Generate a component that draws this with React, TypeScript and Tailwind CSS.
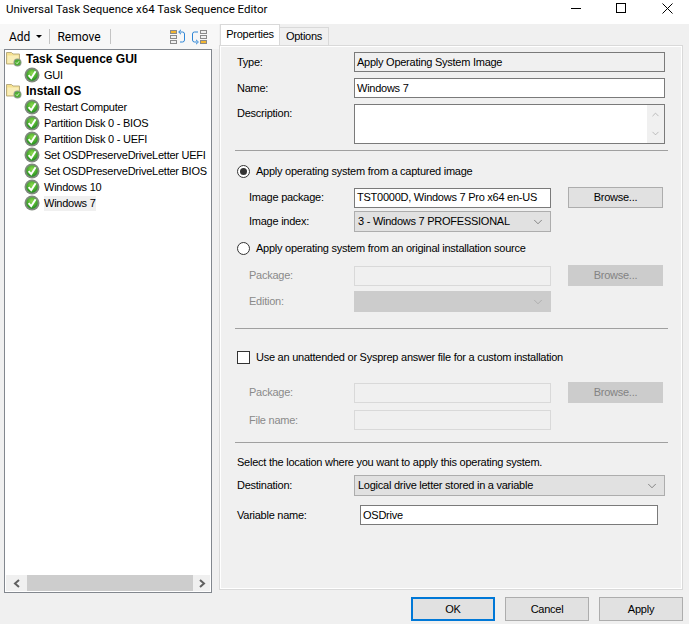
import React, { ReactNode } from "react";
import { ChevronDown, ChevronUp } from "lucide-react";

const steps = [
  { name: "Task Sequence GUI", group: true },
  { name: "GUI" },
  { name: "Install OS", group: true },
  { name: "Restart Computer" },
  { name: "Partition Disk 0 - BIOS" },
  { name: "Partition Disk 0 - UEFI" },
  { name: "Set OSDPreserveDriveLetter UEFI" },
  { name: "Set OSDPreserveDriveLetter BIOS" },
  { name: "Windows 10" },
  { name: "Windows 7", selected: true },
];

const CheckIcon = () => (
  <svg width="16" height="16" viewBox="0 0 16 16" className="shrink-0">
    <defs>
      <radialGradient id="chk" cx="50%" cy="35%" r="65%">
        <stop offset="0%" stopColor="#8fdc4e" />
        <stop offset="100%" stopColor="#1f8f1c" />
      </radialGradient>
    </defs>
    <circle cx="8" cy="8" r="7.5" fill="#7f8a7d" />
    <circle cx="8" cy="8" r="5.7" fill="url(#chk)" />
    <path d="M4.6 8.2 7.2 11.2 11.6 4.2" fill="none" stroke="#fff" strokeWidth="2" />
  </svg>
);

const FolderIcon = () => (
  <svg width="16" height="16" viewBox="0 0 16 16" className="shrink-0">
    <path d="M0.5 1.5h5l1.5 1.5h6.5v10h-13z" fill="#f5e08f" stroke="#b9ad80" />
    <path d="M1.5 4.5h11v7.5h-11z" fill="#f9eeb8" />
    <circle cx="11.5" cy="11.5" r="4" fill="#8f9a8d" />
    <circle cx="11.5" cy="11.5" r="3" fill="#4fae33" />
    <path d="M10 11.5l1.1 1.2 1.9-2.4" fill="none" stroke="#dff5d0" strokeWidth="1" />
  </svg>
);

const MoveUpIcon = () => (
  <svg width="16" height="16" viewBox="0 0 16 16">
    <rect x="0.5" y="1.5" width="6" height="3" fill="#f2b632" stroke="#8a8a8a" />
    <rect x="0.5" y="6.5" width="6" height="3" fill="#f0f0f0" stroke="#8a8a8a" />
    <rect x="0.5" y="11.5" width="6" height="3" fill="#f0f0f0" stroke="#8a8a8a" />
    <path d="M9 3h3.5q2 0 2 2v6q0 2-2 2H10" fill="none" stroke="#2f86d6" strokeWidth="1" />
    <path d="M11 0.8 8.6 3 11 5.2" fill="none" stroke="#2f86d6" strokeWidth="1" />
  </svg>
);

const MoveDownIcon = () => (
  <svg width="16" height="16" viewBox="0 0 16 16">
    <rect x="9.5" y="1.5" width="6" height="3" fill="#f0f0f0" stroke="#8a8a8a" />
    <rect x="9.5" y="6.5" width="6" height="3" fill="#f0f0f0" stroke="#8a8a8a" />
    <rect x="9.5" y="11.5" width="6" height="3" fill="#f2b632" stroke="#8a8a8a" />
    <path d="M7 3H3.5q-2 0-2 2v6q0 2 2 2H6" fill="none" stroke="#2f86d6" strokeWidth="1" />
    <path d="M5 10.8 7.4 13 5 15.2" fill="none" stroke="#2f86d6" strokeWidth="1" />
  </svg>
);

const Field = ({ className, children }: { className: string; children?: ReactNode }) => (
  <div className={`flex items-center whitespace-nowrap border px-[2px] ${className}`}>{children}</div>
);

const Caret = ({ color }: { color: string }) => (
  <ChevronDown size={14} strokeWidth={1} color={color} className="ml-auto mr-[3px]" />
);

const Browse = ({ disabled }: { disabled?: boolean }) => (
  <div
    className={`flex h-[21px] w-[95px] items-center justify-center border ${
      disabled ? "border-[#cccccc] bg-[#cccccc] text-[#838383]" : "border-[#adadad] bg-[#e1e1e1]"
    }`}
  >
    Browse...
  </div>
);

const Divider = () => <div className="ml-[14px] h-px w-[433px] bg-[#a0a0a0]" />;

const Label = ({ children, className = "w-[117px]" }: { children: ReactNode; className?: string }) => (
  <div className={`shrink-0 ${className}`}>{children}</div>
);

const Radio = ({ checked }: { checked?: boolean }) => (
  <div className="flex h-[13px] w-[13px] items-center justify-center rounded-full border border-[#333333] bg-white">
    {checked && <div className="h-[7px] w-[7px] rounded-full bg-[#333333]" />}
  </div>
);

export default function App() {
  return (
    <div className="h-[624px] w-[689px] overflow-hidden bg-[#f0f0f0] font-['Liberation_Sans',sans-serif] text-[11px] leading-none tracking-[-0.25px] text-black">
      <div className="flex h-[24px] items-start bg-white pl-[6px] tracking-normal">
        <span className="pt-[2px] font-['Roboto',sans-serif] text-[11.5px] leading-[14px]">Universal Task Sequence x64 Task Sequence Editor</span>
        <svg width="103" height="16" viewBox="0 0 103 16" className="ml-auto mr-[15px]" fill="none" stroke="#000" strokeWidth="1">
          <path d="M0 8.5h10" />
          <rect x="45.5" y="3.5" width="9" height="9" />
          <path d="M91.5 3.5l10 10M101.5 3.5l-10 10" />
        </svg>
      </div>

      <div className="flex h-[573px]">
        <div className="w-[219px] shrink-0">
          <div className="flex h-[25px] items-center bg-[#f7f7f7] pl-[9px] font-['Roboto',sans-serif] text-[12px] tracking-normal">
            <span>Add</span>
            <div className="ml-[6px] h-0 w-0 border-x-[3px] border-t-[3px] border-x-transparent border-t-black" />
            <div className="ml-[7px] h-[15px] w-px bg-[#c4c4c4]" />
            <span className="ml-[7px]">Remove</span>
            <div className="ml-[9px] h-[15px] w-px bg-[#c4c4c4]" />
            <div className="ml-[59px]"><MoveUpIcon /></div>
            <div className="ml-[5px]"><MoveDownIcon /></div>
          </div>
          <div className="ml-[4px] flex h-[544px] w-[208px] flex-col justify-between border border-[#82878e] bg-white">
            <div className="pl-[1px] pt-[1px]">
              {steps.map((s) => (
                <div key={s.name} className={`flex h-[16px] items-center ${s.group ? "" : "pl-[18px]"}`}>
                  {s.group ? <FolderIcon /> : <CheckIcon />}
                  <span
                    className={`ml-[4px] whitespace-nowrap ${s.group ? "text-[12px] font-bold tracking-normal" : ""} ${
                      s.selected ? "bg-[#f0f0f0] py-[2px]" : ""
                    }`}
                  >
                    {s.name}
                  </span>
                </div>
              ))}
            </div>
            <div className="mx-px mb-px flex h-[16px] items-center justify-between bg-[#f0f0f0]">
              <div className="flex h-full w-[21px] items-center justify-center">
                <svg width="8" height="9" viewBox="0 0 8 9"><path d="M6 1 2 4.5 6 8" fill="none" stroke="#606060" strokeWidth="2" /></svg>
              </div>
              <div className="h-full flex-1 bg-[#cdcdcd]" />
              <div className="flex h-full w-[17px] items-center justify-center">
                <svg width="8" height="9" viewBox="0 0 8 9"><path d="M2 1l4 3.5L2 8" fill="none" stroke="#606060" strokeWidth="2" /></svg>
              </div>
            </div>
          </div>
        </div>

        <div className="w-[464px] shrink-0">
          <div className="relative z-10 flex h-[21px] items-end">
            <div className="ml-px flex h-[21px] w-[60px] items-center justify-center border border-b-0 border-[#d9d9d9] bg-white pb-[1px]">
              Properties
            </div>
            <div className="flex h-[18px] w-[49px] items-center justify-center border border-b-0 border-l-0 border-[#d9d9d9] bg-[#f0f0f0]">
              Options
            </div>
          </div>
          <div className="h-[545px] border border-[#d9d9d9]">
            <div className="h-full border border-white pt-[5px]">
              <div className="flex h-[20px] items-center pl-[16px]">
                <Label>Type:</Label>
                <Field className="h-[20px] w-[311px] border-[#7a7a7a] bg-[#f0f0f0]">Apply Operating System Image</Field>
              </div>
              <div className="mt-[6px] flex h-[20px] items-center pl-[16px]">
                <Label>Name:</Label>
                <Field className="h-[20px] w-[311px] border-[#7a7a7a] bg-white">Windows 7</Field>
              </div>
              <div className="mt-[6px] flex h-[40px] items-start pl-[16px]">
                <Label className="w-[117px] pt-[4px]">Description:</Label>
                <div className="flex h-[40px] w-[311px] justify-end border border-[#7a7a7a] bg-white">
                  <div className="flex w-[17px] flex-col items-center justify-between bg-[#f0f0f0] py-[4px]">
                    <ChevronUp size={11} strokeWidth={1.5} color="#a3a3a3" />
                    <ChevronDown size={11} strokeWidth={1.5} color="#a3a3a3" />
                  </div>
                </div>
              </div>

              <div className="mt-[6px]"><Divider /></div>

              <div className="mt-[14px] flex h-[13px] items-center gap-[6px] pl-[16px]">
                <Radio checked />
                <span>Apply operating system from a captured image</span>
              </div>
              <div className="mt-[9px] flex h-[21px] items-center pl-[28px]">
                <Label className="w-[105px]">Image package:</Label>
                <Field className="h-[20px] w-[197px] border-[#7a7a7a] bg-white">TST0000D, Windows 7 Pro x64 en-US</Field>
                <div className="ml-[17px]"><Browse /></div>
              </div>
              <div className="mt-[3px] flex h-[21px] items-center pl-[28px]">
                <Label className="w-[105px]">Image index:</Label>
                <Field className="h-[21px] w-[197px] border-[#adadad] bg-[#e1e1e1] pl-[3px]">
                  3 - Windows 7 PROFESSIONAL
                  <Caret color="#444444" />
                </Field>
              </div>

              <div className="mt-[10px] flex h-[13px] items-center gap-[6px] pl-[16px]">
                <Radio />
                <span>Apply operating system from an original installation source</span>
              </div>
              <div className="mt-[10px] flex h-[21px] items-center pl-[28px] text-[#8a8a8a]">
                <Label className="w-[105px]">Package:</Label>
                <Field className="h-[20px] w-[197px] border-[#d9d9d9] bg-[#f0f0f0]" />
                <div className="ml-[17px]"><Browse disabled /></div>
              </div>
              <div className="mt-[5px] flex h-[21px] items-center pl-[28px] text-[#8a8a8a]">
                <Label className="w-[105px]">Edition:</Label>
                <Field className="h-[21px] w-[197px] border-[#cccccc] bg-[#cccccc]">
                  <Caret color="#9a9a9a" />
                </Field>
              </div>

              <div className="mt-[16px]"><Divider /></div>

              <div className="mt-[22px] flex h-[13px] items-center gap-[6px] pl-[16px]">
                <div className="h-[13px] w-[13px] border border-[#333333] bg-white" />
                <span>Use an unattended or Sysprep answer file for a custom installation</span>
              </div>
              <div className="mt-[18px] flex h-[21px] items-center pl-[28px] text-[#8a8a8a]">
                <Label className="w-[105px]">Package:</Label>
                <Field className="h-[20px] w-[197px] border-[#d9d9d9] bg-[#f0f0f0]" />
                <div className="ml-[17px]"><Browse disabled /></div>
              </div>
              <div className="mt-[7px] flex h-[20px] items-center pl-[28px] text-[#8a8a8a]">
                <Label className="w-[105px]">File name:</Label>
                <Field className="h-[20px] w-[197px] border-[#d9d9d9] bg-[#f0f0f0]" />
              </div>

              <div className="mt-[12px]"><Divider /></div>

              <div className="mt-[14px] pl-[16px]">Select the location where you want to apply this operating system.</div>
              <div className="mt-[7px] flex h-[21px] items-center pl-[16px]">
                <Label>Destination:</Label>
                <Field className="h-[21px] w-[311px] border-[#adadad] bg-[#e1e1e1] pl-[3px]">
                  Logical drive letter stored in a variable
                  <Caret color="#444444" />
                </Field>
              </div>
              <div className="mt-[9px] flex h-[20px] items-center pl-[16px]">
                <Label className="w-[123px]">Variable name:</Label>
                <Field className="h-[20px] w-[298px] border-[#7a7a7a] bg-white">OSDrive</Field>
              </div>
            </div>
          </div>
        </div>
      </div>

      <div className="flex h-[27px] items-start pl-[411px] pt-0">
        <div className="flex h-[24px] w-[84px] items-center justify-center border-2 border-[#0078d7] bg-[#e1e1e1]">OK</div>
        <div className="ml-[10px] flex h-[24px] w-[84px] items-center justify-center border border-[#adadad] bg-[#e1e1e1]">Cancel</div>
        <div className="ml-[10px] flex h-[24px] w-[84px] items-center justify-center border border-[#adadad] bg-[#e1e1e1]">Apply</div>
      </div>
    </div>
  );
}
